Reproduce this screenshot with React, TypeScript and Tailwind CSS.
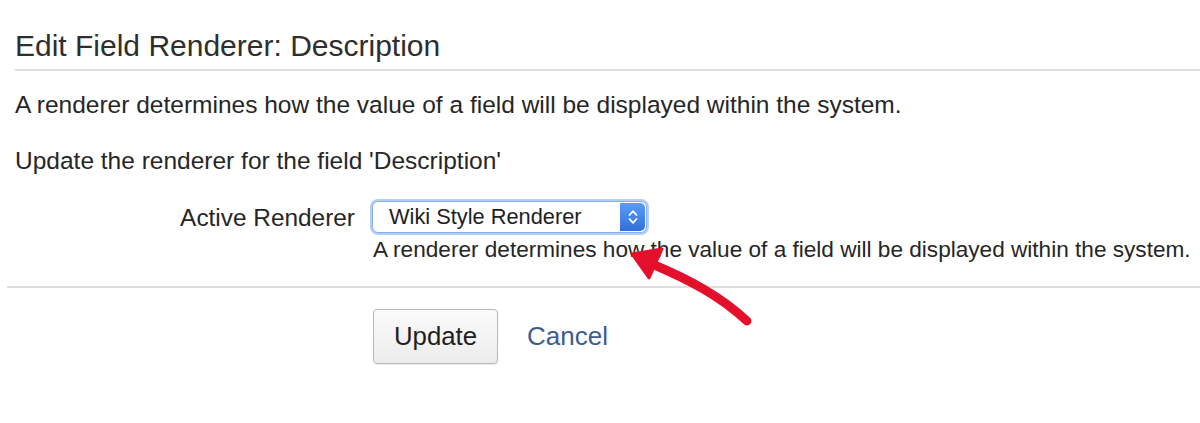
import React from 'react';

function Stepper() {
  return (
    <span className="flex h-full w-[25px] items-center justify-center rounded-r-[5px] bg-gradient-to-b from-[#5b9cf6] to-[#2f6fe0]">
      <svg width="10" height="18" viewBox="0 0 10 18" fill="none">
        <path d="M1.5 7 L5 3.2 L8.5 7" stroke="white" strokeWidth="1.8" strokeLinecap="round" strokeLinejoin="round" />
        <path d="M1.5 11 L5 14.8 L8.5 11" stroke="white" strokeWidth="1.8" strokeLinecap="round" strokeLinejoin="round" />
      </svg>
    </span>
  );
}

function Arrow() {
  // hand-drawn red annotation arrow pointing at the help text
  return (
    <svg
      className="pointer-events-none absolute left-0 top-0"
      width="1200"
      height="423"
      viewBox="0 0 1200 423"
    >
      <path
        d="M652 264 C 690 280, 720 296, 747 321"
        stroke="#e4102b"
        strokeWidth="9"
        strokeLinecap="round"
        fill="none"
      />
      <path d="M632 254 L662 249 L649 278 Z" fill="#e4102b" stroke="#e4102b" strokeWidth="3" strokeLinejoin="round" />
    </svg>
  );
}

export default function App() {
  return (
    <div className="relative h-[423px] w-[1200px] overflow-hidden bg-white pt-[31px] font-['Liberation_Sans',Arial,sans-serif] text-[#262626]">
      <h1 className="ml-[15px] text-[30px] leading-[30px] text-[#2e2e2e]">Edit Field Renderer: Description</h1>
      <div className="ml-[15px] mt-[8px] h-[2px] bg-[#dedede]" />

      <p className="ml-[15px] mt-[21px] text-[24.5px] leading-[25px]">
        A renderer determines how the value of a field will be displayed within the system.
      </p>
      <p className="ml-[15px] mt-[31px] text-[24.5px] leading-[25px]">
        Update the renderer for the field 'Description'
      </p>

      <div className="mt-[28px] grid grid-cols-[355px_1fr] items-center gap-x-[17px]">
        <label className="text-right text-[24.4px] leading-[25px]">Active Renderer</label>
        <div className="flex h-[32px] w-[275px] items-center rounded-[6px] border border-[#86aee8] bg-white pr-px shadow-[0_0_0_2px_rgba(120,165,235,0.55)]">
          <span className="flex-1 pl-[16px] text-[21.8px] leading-none text-[#1e1e1e]">Wiki Style Renderer</span>
          <div className="h-[28px]">
            <Stepper />
          </div>
        </div>
        <div />
        <p className="ml-px mt-[5px] text-[22.6px] leading-[23px]">
          A renderer determines how the value of a field will be displayed within the system.
        </p>
      </div>

      <div className="ml-[7px] mt-[25px] h-[2px] bg-[#dedede]" />

      <div className="mt-[21px] flex items-center gap-[29px] pl-[373px]">
        <button className="h-[55px] w-[125px] rounded-[4px] border border-[#b8b8b8] bg-gradient-to-b from-[#fbfbfb] to-[#ececec] text-[25.8px] text-[#1e1e1e] shadow-[0_1px_1px_rgba(0,0,0,0.08)]">
          Update
        </button>
        <a className="text-[26px] text-[#3d5d8f]">Cancel</a>
      </div>

      <Arrow />
    </div>
  );
}
